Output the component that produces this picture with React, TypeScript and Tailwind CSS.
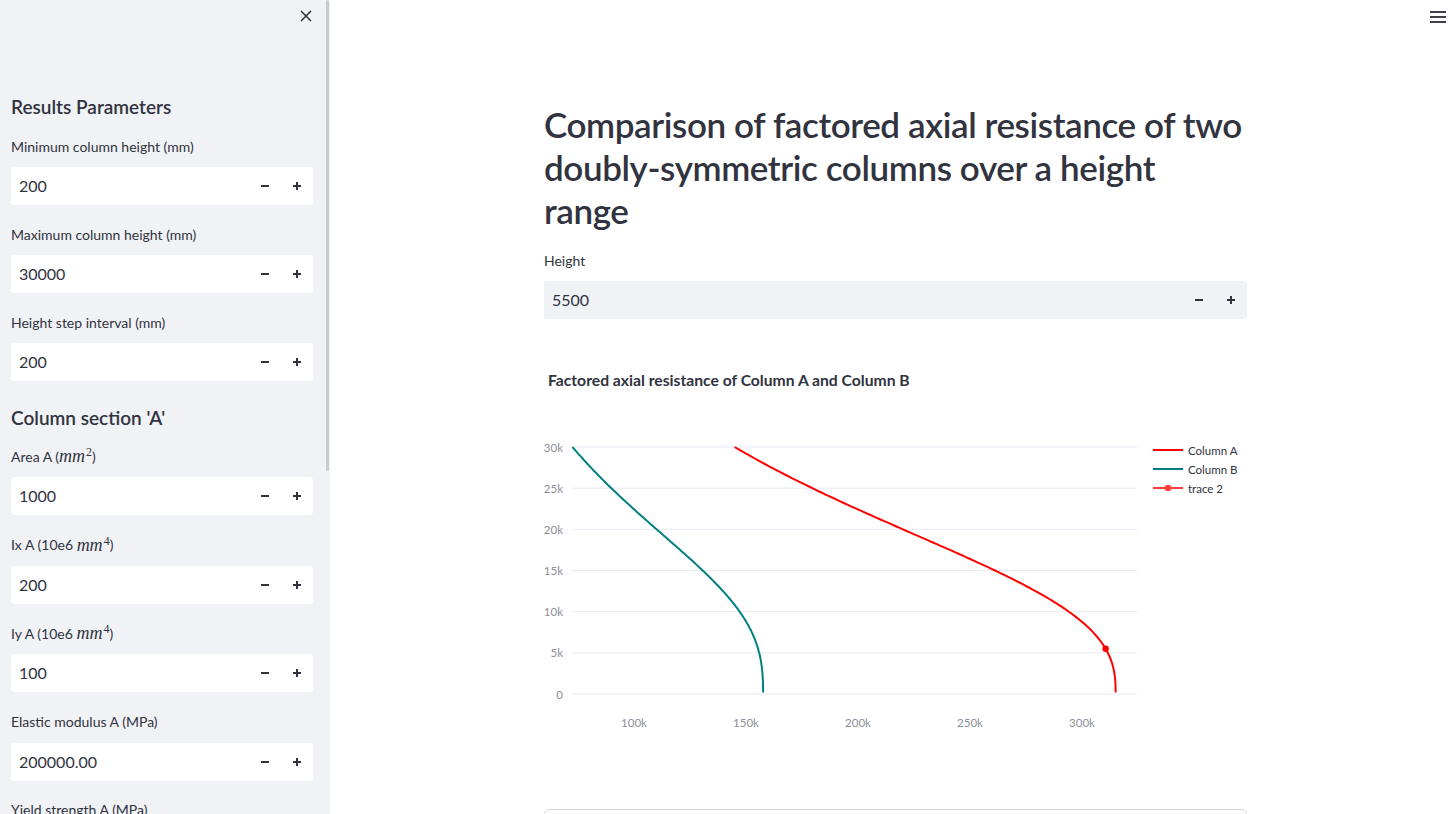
import React from 'react';

const FONT = "font-['Source_Sans_Pro','Lato','Noto_Sans',sans-serif]";

// plot mapping (svg coords, origin at the chart's top-left)
const px = (v: number) => 28 + ((v - 72300) / 50000) * 112;
const py = (h: number) => 359 - (h / 30000) * 247;

function resistance(c0: number, h: number) {
  const lam = h / 23940;
  return c0 * Math.pow(1 + Math.pow(lam, 2.68), -1 / 1.34);
}

const heights = Array.from({ length: 150 }, (_, i) => 200 + i * 200);
const lineA = heights.map((h) => `${px(resistance(315000, h)).toFixed(1)},${py(h).toFixed(1)}`).join(' ');
const lineB = heights.map((h) => `${px(resistance(157600, h)).toFixed(1)},${py(h).toFixed(1)}`).join(' ');
const marker = { x: px(resistance(315000, 5500)), y: py(5500) };

function MinusIcon() {
  return (
    <svg width="10" height="10" viewBox="0 0 10 10">
      <line x1="1" y1="5" x2="9" y2="5" stroke="#31333f" strokeWidth="2" />
    </svg>
  );
}

function PlusIcon() {
  return (
    <svg width="10" height="10" viewBox="0 0 10 10">
      <line x1="1" y1="5" x2="9" y2="5" stroke="#31333f" strokeWidth="2" />
      <line x1="5" y1="1" x2="5" y2="9" stroke="#31333f" strokeWidth="2" />
    </svg>
  );
}

function NumberInput({ value, grey }: { value: string; grey?: boolean }) {
  return (
    <div className={`flex h-[38px] items-center rounded-[4px] ${grey ? 'bg-[#f0f2f6]' : 'bg-white'}`}>
      <input
        defaultValue={value}
        className="min-w-0 flex-1 bg-transparent pl-2 text-[16px] text-[#31333f] outline-none"
      />
      <button className="flex h-full w-8 items-center justify-center">
        <MinusIcon />
      </button>
      <button className="flex h-full w-8 items-center justify-center">
        <PlusIcon />
      </button>
    </div>
  );
}

function Field({ label, value, grey, math }: { label: React.ReactNode; value: string; grey?: boolean; math?: boolean }) {
  return (
    <div className={math ? 'mb-[17.6px]' : 'mb-[17px]'}>
      <div className="mb-[9px] flex h-6 items-center text-[14px] text-[#31333f]">{label}</div>
      <NumberInput value={value} grey={grey} />
    </div>
  );
}

function Mm({ pow }: { pow: string }) {
  return (
    <span className="font-['Liberation_Serif',serif] text-[18px] italic leading-none">
      mm<sup className="ml-px text-[12px] not-italic">{pow}</sup>
    </span>
  );
}

function SideHeading({ children, first }: { children: React.ReactNode; first?: boolean }) {
  return (
    <h3
      className={`h-7 text-[19px] leading-7 font-semibold text-[#31333f] ${
        first ? 'mt-[5px] mb-[13px]' : 'mt-[23px] mb-3'
      }`}
    >
      {children}
    </h3>
  );
}

function Chart() {
  const yTicks = [0, 5000, 10000, 15000, 20000, 25000, 30000];
  const xTicks = [100000, 150000, 200000, 250000, 300000];
  return (
    <svg width="703" height="458" className="-mt-px block">
      <text x="4" y="45" dominantBaseline="central" fontSize="15.7" fontWeight="700" fill="#31333f">
        Factored axial resistance of Column A and Column B
      </text>
      {yTicks.map((t) => (
        <g key={t}>
          <line x1="28" x2="593" y1={py(t)} y2={py(t)} stroke="#e6e9ef" strokeWidth="1" />
          <text x="19" y={py(t)} textAnchor="end" dominantBaseline="central" fontSize="11.5" fill="#8c8e98">
            {t === 0 ? '0' : `${t / 1000}k`}
          </text>
        </g>
      ))}
      {xTicks.map((t) => (
        <text key={t} x={px(t)} y="387" textAnchor="middle" dominantBaseline="central" fontSize="11.5" fill="#8c8e98">
          {`${t / 1000}k`}
        </text>
      ))}
      <polyline points={lineA} fill="none" stroke="#ff0000" strokeWidth="2" strokeLinejoin="round" />
      <polyline points={lineB} fill="none" stroke="#008080" strokeWidth="2" strokeLinejoin="round" />
      <circle cx={marker.x} cy={marker.y} r="3.2" fill="#ff0000" />

      {/* legend */}
      <line x1="609" x2="639" y1="115" y2="115" stroke="#ff0000" strokeWidth="2" />
      <text x="644" y="115" dominantBaseline="central" fontSize="11.5" fill="#31333f">Column A</text>
      <line x1="609" x2="639" y1="134" y2="134" stroke="#008080" strokeWidth="2" />
      <text x="644" y="134" dominantBaseline="central" fontSize="11.5" fill="#31333f">Column B</text>
      <line x1="609" x2="639" y1="153" y2="153" stroke="#ff3b3b" strokeWidth="2" />
      <circle cx="624" cy="153" r="3.2" fill="#ff3b3b" />
      <text x="644" y="153" dominantBaseline="central" fontSize="11.5" fill="#31333f">trace 2</text>
    </svg>
  );
}

export default function App() {
  return (
    <div className={`flex h-[814px] w-full overflow-hidden bg-white ${FONT}`}>
      <aside className="relative h-full w-[330px] shrink-0 overflow-hidden bg-[#f0f2f6] pr-[17px] pl-[11px]">
        <button className="absolute top-[10px] left-[300px] h-3 w-3">
          <svg width="12" height="12" viewBox="0 0 12 12">
            <path d="M1 1 L11 11 M11 1 L1 11" stroke="#31333f" strokeWidth="1.6" />
          </svg>
        </button>
        <div className="absolute top-0 right-[1px] h-[471px] w-[3px] rounded-full bg-[#c9cacf]" />

        <div className="pt-[88px]">
          <SideHeading first>Results Parameters</SideHeading>
          <Field label="Minimum column height (mm)" value="200" />
          <Field label="Maximum column height (mm)" value="30000" />
          <Field label="Height step interval (mm)" value="200" />

          <SideHeading>Column section 'A'</SideHeading>
          <Field math label={<>Area A (<Mm pow="2" />)</>} value="1000" />
          <Field math label={<>Ix A (10e6&nbsp;<Mm pow="4" />)</>} value="200" />
          <Field math label={<>Iy A (10e6&nbsp;<Mm pow="4" />)</>} value="100" />
          <Field label="Elastic modulus A (MPa)" value="200000.00" />
          <Field label="Yield strength A (MPa)" value="350.00" />
        </div>
      </aside>

      <main className="relative h-full flex-1 overflow-hidden">
        <button className="absolute top-[9px] right-[5px] flex h-4 w-4 flex-col justify-between py-[2px]">
          <span className="block h-[2px] w-4 bg-[#3d3f4a]" />
          <span className="block h-[2px] w-4 bg-[#3d3f4a]" />
          <span className="block h-[2px] w-4 bg-[#3d3f4a]" />
        </button>

        <div className="ml-[214px] w-[703px] pt-[103px]">
          <h1 className="mb-4 text-[35px] leading-[43px] font-semibold tracking-[-0.4px] text-[#31333f]">
            Comparison of factored axial resistance of two doubly-symmetric columns over a height range
          </h1>
          <Field label="Height" value="5500" grey />
          <Chart />
          <div className="mt-4 h-10 rounded-t-[5px] border border-[#d6d6d9]" />
        </div>
      </main>
    </div>
  );
}
